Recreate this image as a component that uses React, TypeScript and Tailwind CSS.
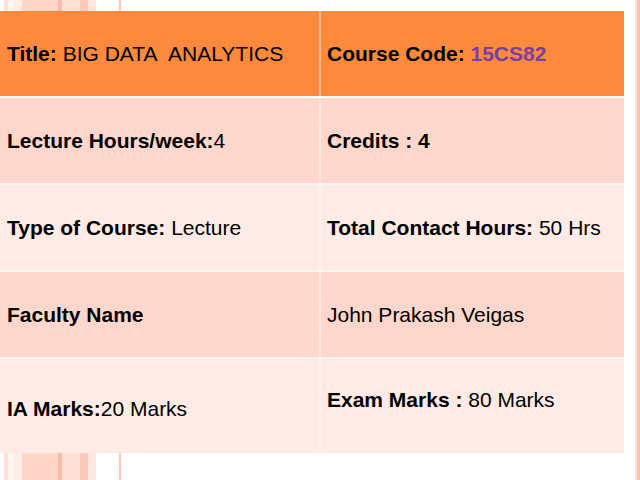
const stripes = [
  { w: "w-[4px]", c: "bg-white" },
  { w: "w-[4px]", c: "bg-[#fde2d9]" },
  { w: "w-[6px]", c: "bg-[#fff6f3]" },
  { w: "w-[8px]", c: "bg-[#fdede7]" },
  { w: "w-[36px]", c: "bg-[#fdd6c8]" },
  { w: "w-[4px]", c: "bg-[#f9bca7]" },
  { w: "w-[18px]", c: "bg-[#fde0d6]" },
  { w: "w-[8px]", c: "bg-[#fbcab8]" },
  { w: "w-[8px]", c: "bg-[#fde6de]" },
  { w: "w-[23px]", c: "bg-white" },
  { w: "w-[2px]", c: "bg-[#fbc6b4]" },
];

function Stripes({ height }: { height: string }) {
  return (
    <div className={`flex ${height}`}>
      {stripes.map((s, i) => (
        <div key={i} className={`${s.w} ${s.c} h-full`} />
      ))}
    </div>
  );
}

type Row = {
  bg: string;
  height: string;
  left: React.ReactNode;
  right: React.ReactNode;
  rightPad?: string;
  leftPad?: string;
};

const rows: Row[] = [
  {
    bg: "bg-[#fd8a3c]",
    height: "h-[85px]",
    left: (
      <>
        <b>Title:</b> BIG DATA&nbsp; ANALYTICS
      </>
    ),
    right: (
      <b>
        Course Code: <span className="text-[#7a3ea2]">15CS82</span>
      </b>
    ),
  },
  {
    bg: "bg-[#fdd7cb]",
    height: "h-[85px]",
    left: (
      <>
        <b>Lecture Hours/week:</b>4
      </>
    ),
    right: <b>Credits : 4</b>,
  },
  {
    bg: "bg-[#feebe5]",
    height: "h-[85px]",
    left: (
      <>
        <b>Type of Course:</b> Lecture
      </>
    ),
    right: (
      <>
        <b>Total Contact Hours:</b> 50 Hrs
      </>
    ),
  },
  {
    bg: "bg-[#fdd7cb]",
    height: "h-[85px]",
    left: <b>Faculty Name</b>,
    right: <>John Prakash Veigas</>,
  },
  {
    bg: "bg-[#feebe5]",
    height: "h-[94px]",
    left: (
      <>
        <b>IA Marks:</b>20 Marks
      </>
    ),
    right: (
      <>
        <b>Exam Marks :</b> 80 Marks
      </>
    ),
    leftPad: "pt-[6px]",
    rightPad: "pb-[12px]",
  },
];

export default function App() {
  return (
    <div
      className="w-[640px] h-[480px] bg-white flex overflow-hidden text-[21px] text-black"
      style={{ fontFamily: '"Liberation Sans", Arial, sans-serif' }}
    >
      <div className="w-[624px] flex flex-col">
        <Stripes height="h-[11px]" />
        <div className="flex flex-col">
          {rows.map((r, i) => (
            <div key={i} className="flex flex-col">
              {i > 0 && (
                <div className={i === 1 ? "h-[2px] bg-white" : "h-[2px] bg-[#fff6f3]"} />
              )}
              <div className={`flex ${r.height} ${r.bg}`}>
                <div className={`w-[319px] flex items-center pl-[7px] ${r.leftPad ?? ""}`}>
                  <span>{r.left}</span>
                </div>
                <div className="w-[2px] bg-white/40" />
                <div className={`flex-1 flex items-center pl-[6px] ${r.rightPad ?? ""}`}>
                  <span>{r.right}</span>
                </div>
              </div>
            </div>
          ))}
        </div>
        <Stripes height="h-[27px]" />
      </div>
      <div className="w-[11px]" />
      <div className="w-[2px] bg-[#fde0d6]" />
      <div className="w-[3px] bg-[#fbc3b1]" />
    </div>
  );
}
